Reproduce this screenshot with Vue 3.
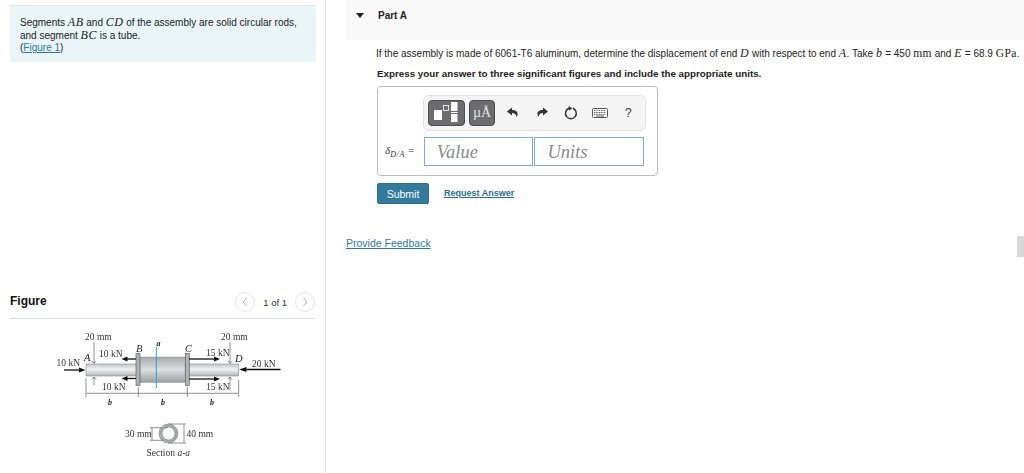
<template>
  <div class="page">
    <aside class="left">
      <div class="intro">
        <p>
          Segments <i class="m">AB</i> and <i class="m">CD</i> of the assembly are solid circular rods,<br />
          and segment <i class="m">BC</i> is a tube.<br />
          (<a class="link">Figure 1</a>)
        </p>
      </div>
      <div class="figure-head">
        <h2>Figure</h2>
        <div class="pager">
          <span class="round">
            <svg width="8" height="10" viewBox="0 0 8 10"><path d="M5.500 1 2 5l3.500 4" fill="none" stroke="#b5b5b5" stroke-width="1" /></svg>
          </span>
          <span class="count">1 of 1</span>
          <span class="round">
            <svg width="8" height="10" viewBox="0 0 8 10"><path d="M2.500 1 6 5 2.500 9" fill="none" stroke="#b5b5b5" stroke-width="1" /></svg>
          </span>
        </div>
      </div>
      <svg class="diagram" width="250" height="140" viewBox="0 0 250 140">
        <defs>
          <linearGradient id="rod" x1="0" y1="0" x2="0" y2="1">
            <stop offset="0" stop-color="#c4c8cb" />
            <stop offset="0.45" stop-color="#eef0f1" />
            <stop offset="1" stop-color="#b4b8bc" />
          </linearGradient>
          <linearGradient id="tube" x1="0" y1="0" x2="0" y2="1">
            <stop offset="0" stop-color="#a6aaae" />
            <stop offset="0.5" stop-color="#dcdfe1" />
            <stop offset="1" stop-color="#9a9ea2" />
          </linearGradient>
        </defs>
        <!-- rods and tube -->
        <rect x="46" y="39" width="152.500" height="12" fill="url(#rod)" stroke="#777" stroke-width="0.5" />
        <rect x="100" y="32" width="45" height="25.500" fill="url(#tube)" stroke="#888" stroke-width="0.4" />
        <rect x="96" y="28.500" width="4" height="32" fill="#aeb2b5" stroke="#555" stroke-width="0.6" />
        <rect x="145.300" y="28.500" width="4" height="32" fill="#aeb2b5" stroke="#555" stroke-width="0.6" />
        <path d="M116.300 21.500V63" stroke="#2fa3c4" stroke-width="1" />
        <!-- load arrows -->
        <g stroke="#111" stroke-width="1.300" fill="#111">
          <path d="M24 45h16" /><path d="M45.500 45l-6.500-2.500v5z" stroke="none" />
          <path d="M240.500 44.500h-34" /><path d="M199 44.500l7.500-2.500v5z" stroke="none" />
          <path d="M96 34H87" /><path d="M81.500 34l6-2.500v5z" stroke="none" />
          <path d="M96 53.500H87" /><path d="M81.500 53.500l6-2.500v5z" stroke="none" />
          <path d="M149 34h25" /><path d="M180 34l-6-2.500v5z" stroke="none" />
          <path d="M149 54h25" /><path d="M180 54l-6-2.500v5z" stroke="none" />
        </g>
        <!-- leaders and dimensions -->
        <g stroke="#444" stroke-width="0.6" fill="none">
          <path d="M54 17v21M52 36l2 2.500 2-2.500" />
          <path d="M190 17v21M188 36l2 2.500 2-2.500" />
          <path d="M54 52v8M52 54.500l2-2.500 2 2.500" />
          <path d="M190 52v13M188 54.500l2-2.500 2 2.500" />
          <path d="M46 53v19M98.300 62v10M147.300 62v10M198.700 55v17" />
          <path d="M47 68.300h151" />
          <path d="M112 103v12M110 102.700h18M110 115.300h18" />
          <path d="M144 99.500v18M128 99h18M128 118h18" />
        </g>
        <g fill="none">
          <circle cx="128.500" cy="108.500" r="8" stroke="#a8abae" stroke-width="2.600" />
          <circle cx="128.500" cy="108.500" r="9.500" stroke="#555" stroke-width="0.500" />
          <circle cx="128.500" cy="108.500" r="6.500" stroke="#555" stroke-width="0.500" />
        </g>
        <!-- labels -->
        <g class="dim">
          <text x="45" y="15">20 mm</text>
          <text x="181" y="15">20 mm</text>
          <text x="16.500" y="41">10 kN</text>
          <text x="59" y="31.500">10 kN</text>
          <text x="166" y="31">15 kN</text>
          <text x="212" y="42">20 kN</text>
          <text x="62" y="65">10 kN</text>
          <text x="166" y="65">15 kN</text>
          <text x="85" y="112">30 mm</text>
          <text x="146.500" y="112">40 mm</text>
          <text x="106.500" y="130.500">Section <tspan font-style="italic">a-a</tspan></text>
        </g>
        <g class="pt">
          <text x="44" y="36">A</text>
          <text x="96" y="26.500">B</text>
          <text x="145" y="26.500">C</text>
          <text x="195" y="36.500">D</text>
          <text x="116.500" y="21" class="small">a</text>
          <text x="68" y="79.500" class="small">b</text>
          <text x="121" y="79.500" class="small">b</text>
          <text x="170" y="79.500" class="small">b</text>
        </g>
      </svg>
    </aside>

    <main class="right">
      <div class="part-head">
        <span class="tri"></span>
        <span>Part A</span>
      </div>
      <div class="part-body">
        <p class="question">
          If the assembly is made of 6061-T6 aluminum, determine the displacement of end <i class="m">D</i> with respect to end <i class="m">A</i>. Take <i class="m">b</i> = 450 <span class="unit">mm</span> and <i class="m">E</i> = 68.9 <span class="unit">GPa</span>.
        </p>
        <p class="express">Express your answer to three significant figures and include the appropriate units.</p>

        <div class="answer">
          <div class="toolbar">
            <button class="tool wide">
              <svg width="35" height="24" viewBox="0 0 35 24">
                <rect x="5" y="9" width="8" height="10" fill="#fff" />
                <rect x="14.500" y="4.500" width="5" height="5" fill="none" stroke="#fff" stroke-width="0.800" />
                <rect x="22" y="1" width="6.500" height="9" fill="#fff" />
                <rect x="22" y="11" width="6.500" height="1" fill="#fff" />
                <rect x="22" y="13" width="6.500" height="8" fill="#fff" />
              </svg>
            </button>
            <button class="tool units">µÅ</button>
            <svg class="ico" width="14" height="14" viewBox="0 0 14 14">
              <path d="M6 1.500 1 5.500l5 4V7c2.500 0 3.800.8 4.600 4 .6-.8 1-2 1-3.200C11.600 5.400 9.200 4 6 4z" fill="#333" />
            </svg>
            <svg class="ico" width="14" height="14" viewBox="0 0 14 14">
              <path d="M8 1.500l5 4-5 4V7c-2.500 0-3.800.8-4.600 4-.6-.8-1-2-1-3.200C2.400 5.400 4.800 4 8 4z" fill="#333" />
            </svg>
            <svg class="ico" width="16" height="16" viewBox="0 0 16 16">
              <path d="M9.800 3.300a5.400 5.400 0 1 1-3.800 0" fill="none" stroke="#333" stroke-width="1.500" />
              <path d="M5.500 1l3.800 2.300-3.300 2.500z" fill="#333" />
            </svg>
            <svg class="ico" width="16" height="10" viewBox="0 0 16 10">
              <rect x="0.500" y="0.500" width="15" height="9" rx="1" fill="#fff" stroke="#555" />
              <path d="M2 2.500h12M2 4.500h12M2 6.300h12" stroke="#555" stroke-dasharray="1 0.700" />
              <path d="M4 8h8" stroke="#555" />
            </svg>
            <span class="help">?</span>
          </div>
          <div class="entry">
            <span class="sym"><i>δ</i><sub>D/A</sub> =</span>
            <span class="field">Value</span>
            <span class="field">Units</span>
          </div>
        </div>

        <div class="actions">
          <button class="submit">Submit</button>
          <a class="request">Request Answer</a>
        </div>
      </div>
      <a class="link feedback">Provide Feedback</a>
    </main>

    <div class="scroll-thumb"></div>
  </div>
</template>

<script setup>
</script>

<style>
html, body { margin: 0; overflow: hidden; background: #fff; }
</style>

<style scoped>
.page {
  position: relative;
  display: flex;
  width: 1024px;
  height: 473px;
  overflow: hidden;
  font-family: "Liberation Sans", Arial, sans-serif;
  color: #222;
  font-size: 10px;
}

.left {
  width: 325px;
  height: 473px;
  border-right: 1px solid #dfe5ea;
  flex-shrink: 0;
}

.intro {
  margin: 5px 9px 0 10px;
  height: 57px;
  box-sizing: border-box;
  padding: 10px 10px 0;
  background: #e9f5f7;
  border-top: 1px solid #dde4ea;
}
.intro p { margin: 0; line-height: 12px; white-space: nowrap; }

.m { font-family: "Liberation Serif", serif; font-style: italic; font-size: 12px; line-height: 1; letter-spacing: 0.5px; }
.unit { font-family: "Liberation Serif", serif; font-size: 11.500px; line-height: 1; letter-spacing: 0.4px; }

.link { color: #2a7a9e; text-decoration: underline; }

.figure-head {
  display: flex;
  align-items: center;
  justify-content: space-between;
  margin: 227px 10px 0;
  height: 30px;
  box-sizing: border-box;
  padding-bottom: 5px;
  border-bottom: 1px solid #d9dde0;
}
.figure-head h2 { margin: 0; font-size: 12px; font-weight: 700; color: #111; }

.pager { display: flex; align-items: center; gap: 8px; margin-top: 2px; }
.round {
  width: 20px; height: 20px;
  box-sizing: border-box;
  border: 1px solid #e6e6e6;
  border-radius: 50%;
  display: flex; align-items: center; justify-content: center;
}
.count { font-size: 9.500px; color: #333; }

.diagram { display: block; margin: 6px 0 0 40px; filter: blur(0.3px); }
.dim text { font-family: "Liberation Serif", serif; font-size: 9.500px; fill: #333; }
.pt text { font-family: "Liberation Serif", serif; font-style: italic; font-size: 10.500px; fill: #222; }
.pt text.small { font-size: 8px; font-weight: 700; }

.right { flex: 1; margin-left: 19px; min-width: 0; }

.part-head {
  display: flex;
  align-items: flex-start;
  height: 40px;
  box-sizing: border-box;
  padding: 10px 0 0 11px;
  background: #f9f9f9;
  font-weight: 700;
  font-size: 10px;
  color: #222;
}
.tri {
  width: 0; height: 0;
  margin: 3px 14px 0 0;
  border-left: 4px solid transparent;
  border-right: 4px solid transparent;
  border-top: 5px solid #222;
}

.part-body { padding: 0 0 0 32px; }

.question { margin: 7px 0 0 -1px; white-space: nowrap; font-size: 10px; line-height: 13px; }
.express { margin: 7px 0 0; font-size: 9.800px; font-weight: 700; line-height: 13px; color: #222; }

.answer {
  width: 281px;
  height: 90px;
  box-sizing: border-box;
  margin-top: 6px;
  padding: 8px 12px 0 45px;
  border: 1px solid #bdbdbd;
  border-radius: 4px;
}

.toolbar {
  display: flex;
  align-items: center;
  width: 223px;
  height: 36px;
  box-sizing: border-box;
  padding-left: 4px;
  background: #f4f4f4;
  border: 1px solid #e2e2e2;
  border-radius: 6px;
}
.tool {
  height: 26px;
  padding: 0;
  border: 1px solid #4c4c4c;
  border-radius: 4px;
  background: #6d6d6f;
  color: #e4e4e4;
  display: flex; align-items: center; justify-content: center;
  flex-shrink: 0;
}
.tool.wide { width: 37px; margin-right: 4px; }
.tool.units { width: 26px; font-family: "Liberation Serif", serif; font-size: 14px; }
.ico { flex-shrink: 0; }
.toolbar > .ico:nth-of-type(1) { margin-left: 11px; }
.toolbar > .ico:nth-of-type(2) { margin-left: 15px; }
.toolbar > .ico:nth-of-type(3) { margin-left: 14px; }
.toolbar > .ico:nth-of-type(4) { margin-left: 13px; }
.help { margin-left: 17px; font-size: 12px; color: #333; }

.entry { display: flex; align-items: center; margin: 6px 0 0 -38px; }
.sym {
  width: 39px;
  font-family: "Liberation Serif", serif;
  font-size: 11px;
  color: #333;
  white-space: nowrap;
}
.sym sub { font-size: 8px; font-style: italic; letter-spacing: 0.7px; }
.field {
  width: 110px;
  height: 29px;
  box-sizing: border-box;
  padding-left: 12px;
  margin-right: 1px;
  border: 1px solid #7fb0c6;
  font-family: "Liberation Serif", serif;
  font-style: italic;
  font-size: 18.500px;
  line-height: 28px;
  color: #8a8a8a;
}

.actions { display: flex; align-items: center; margin-top: 7px; }
.submit {
  width: 52px;
  height: 21px;
  padding: 0;
  border: 1px solid #2e6f8e;
  border-radius: 2px;
  background: #337a9c;
  color: #fff;
  font-family: inherit;
  font-size: 10.500px;
}
.request {
  margin: 0 0 2px 15px;
  color: #2a7090;
  font-size: 9px;
  font-weight: 700;
  text-decoration: underline;
}

.feedback { display: inline-block; margin: 33px 0 0 1px; font-size: 10.500px; }

.scroll-thumb {
  position: absolute;
  right: 0; top: 236px;
  width: 7px; height: 21px;
  background: #d8d8d8;
}
</style>
